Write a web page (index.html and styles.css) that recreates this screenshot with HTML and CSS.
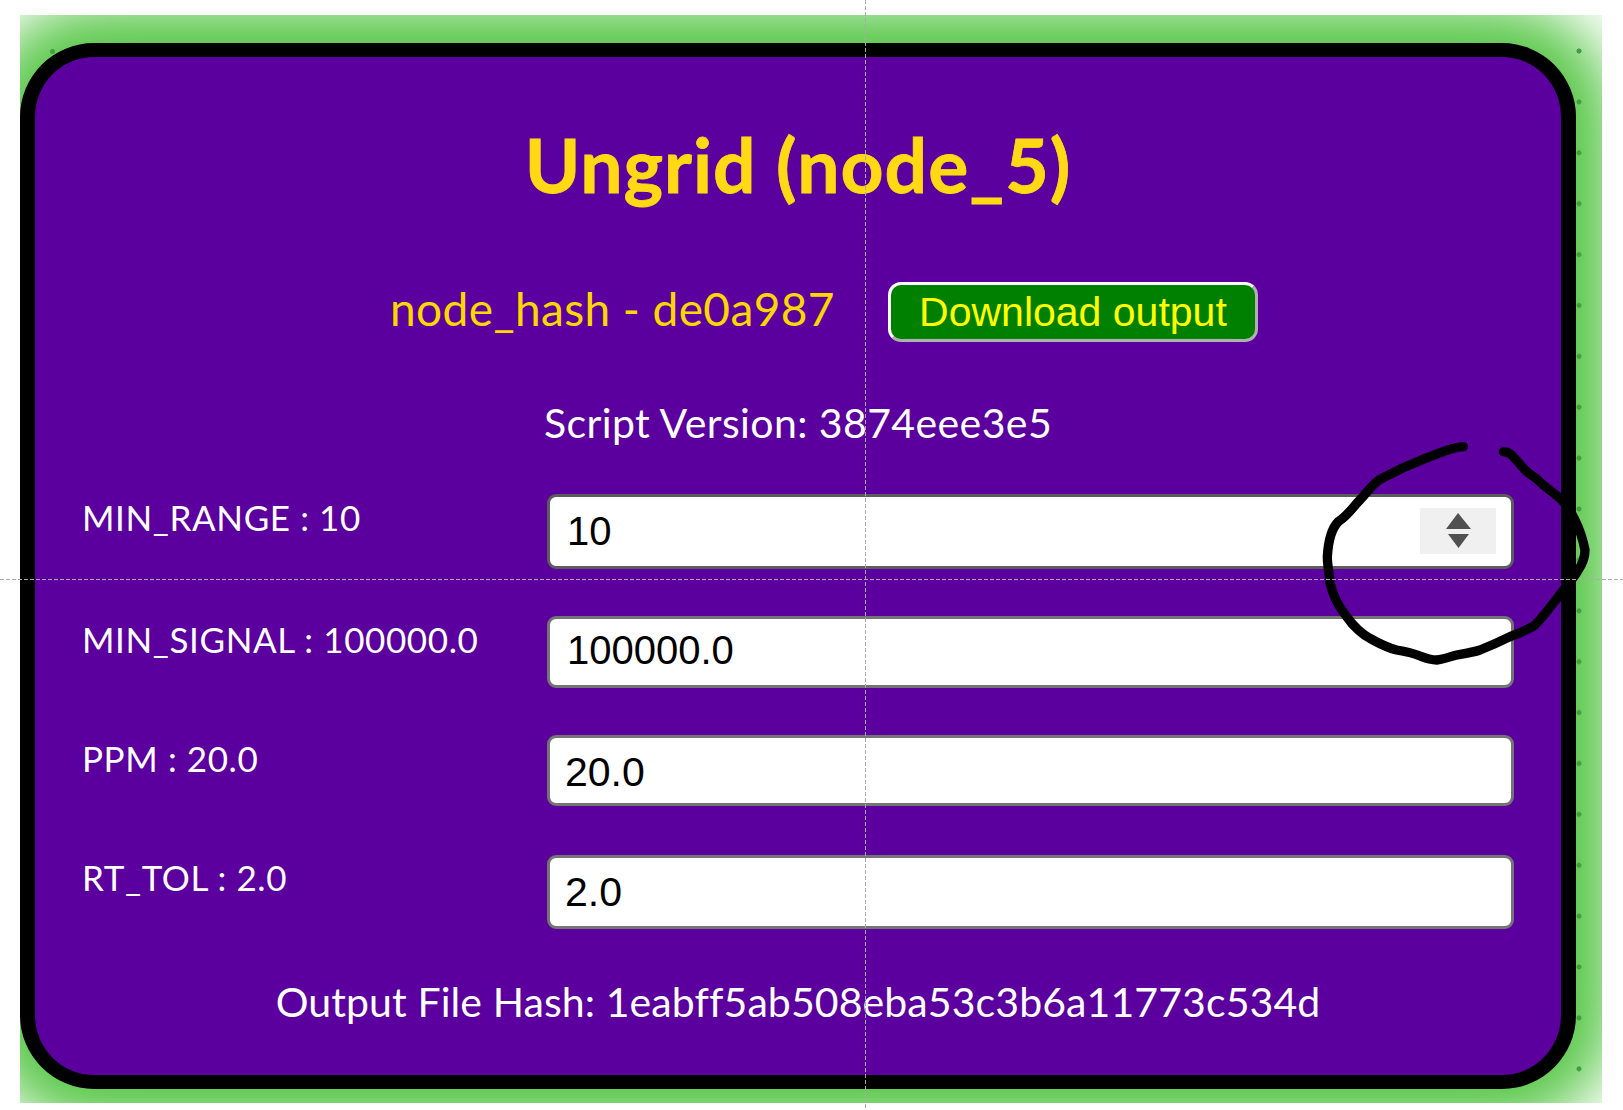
FILE: index.html
```html
<!DOCTYPE html>
<html lang="en">
<head>
<meta charset="utf-8">
<title>Ungrid (node_5)</title>
<link rel="stylesheet" href="styles.css">
</head>
<body>
<div class="frame">
  <main class="card">
    <h1 class="title">Ungrid (node_5)</h1>
    <div class="hash-row">
      <span class="node-hash">node_hash - de0a987</span>
      <button class="download" type="button">Download output</button>
    </div>
    <p class="meta script-version">Script Version: 3874eee3e5</p>
    <form class="params">
      <div class="row row-range">
        <label class="param-label">MIN_RANGE : 10</label>
        <div class="field">
          <input class="param-input" type="text" value="10">
          <span class="spinner">
            <svg width="76" height="46" viewBox="0 0 76 46"><path class="arrow" d="M38 5 26 21H51Z"/><path class="arrow" d="M28 26H49L38.5 40Z"/></svg>
          </span>
        </div>
      </div>
      <div class="row row-signal">
        <label class="param-label">MIN_SIGNAL : 100000.0</label>
        <div class="field"><input class="param-input" type="text" value="100000.0"></div>
      </div>
      <div class="row row-ppm">
        <label class="param-label">PPM : 20.0</label>
        <div class="field"><input class="param-input inset-less" type="text" value="20.0"></div>
      </div>
      <div class="row row-rt">
        <label class="param-label">RT_TOL : 2.0</label>
        <div class="field"><input class="param-input inset-less" type="text" value="2.0"></div>
      </div>
    </form>
    <p class="meta output-hash">Output File Hash: 1eabff5ab508eba53c3b6a11773c534d</p>
  </main>
  <div class="dots"></div>
  <div class="corner-dot"></div>
</div>
<svg class="scribble" width="373" height="280" viewBox="0 0 1119 840"><path d="M640 80C620 80 590 90 540 110C510 122 470 135 390 178C370 190 345 225 320 250C300 275 280 295 265 305C245 325 235 360 232 410C232 440 240 470 240 490C250 530 270 565 290 590C310 620 340 645 360 655C390 672 420 685 440 690C470 695 490 700 510 708C530 716 545 720 560 720C580 718 600 710 620 705C650 700 670 697 690 690C720 678 750 665 780 650C805 640 835 630 855 615C880 590 910 550 940 510C955 490 975 470 985 450C995 435 1005 410 1005 390C1000 365 990 330 975 300C965 280 950 255 935 240C920 225 900 212 880 195C865 180 845 165 830 155C815 140 800 120 785 105C778 98 770 96 760 95"/></svg>
<div class="guide guide-v"></div>
<div class="guide guide-h"></div>
</body>
</html>
```
FILE: styles.css
```css
* { box-sizing: border-box; }
html, body { margin: 0; height: 1110px; background: #fff; overflow: hidden; }
body { padding: 15px 21px 0 20px; font-family: "Lato", "Liberation Sans", sans-serif; }

.frame {
  position: relative;
  width: 1582px;
  height: 1088px;
  padding-top: 28px;
  overflow: hidden;
}

.card {
  width: 1556px;
  height: 1046px;
  padding: 0 47px;
  border: solid #000;
  border-width: 14.5px 15.5px;
  border-radius: 74px;
  background: #5b009e;
  box-shadow: 0 0 60px 38px #58c748;
  text-align: center;
}

.title {
  margin: 67px 0 0;
  font-size: 75px;
  line-height: 80px;
  font-weight: 700;
  color: #ffda14;
  letter-spacing: 1px;
  -webkit-text-stroke: 0.8px #ffda14;
}

.hash-row {
  display: flex;
  justify-content: center;
  align-items: center;
  gap: 53px;
  margin-top: 78px;
  padding-left: 52px;
}

.node-hash { margin-top: -6px; font-size: 46px; line-height: 60px; color: #ffd700; letter-spacing: 0.4px; }

.download {
  width: 370px;
  height: 60px;
  padding: 0;
  border: 3px solid;
  border-color: #fff #b0b0b0 #b0b0b0 #fff;
  border-radius: 13px;
  background: #008000;
  color: #ff0;
  font-family: "Liberation Sans", sans-serif;
  font-size: 41px;
}

.meta { margin: 0; font-size: 41px; line-height: 50px; color: #fff; }
.script-version { margin-top: 56px; letter-spacing: 0.4px; }
.output-hash { margin-top: 48px; letter-spacing: 0.1px; }

.params { margin-top: 46px; text-align: left; }
.row { display: grid; grid-template-columns: 465px 1fr; }
.row-range { height: 75px; }
.row-signal { height: 72px; margin-top: 47px; }
.row-ppm { height: 71px; margin-top: 47px; }
.row-rt { height: 74px; margin-top: 49px; }

.param-label { padding-top: 3px; font-size: 35px; line-height: 40px; color: #fff; letter-spacing: 0.6px; }
.row-rt .param-label { padding-top: 2px; }

.field { position: relative; height: 100%; }

.param-input {
  display: block;
  width: 100%;
  height: 100%;
  padding: 0 0 0 17px;
  border: 3.5px solid #747474;
  border-radius: 9px;
  background: #fff;
  color: #000;
  font-family: "Liberation Sans", sans-serif;
  font-size: 40px;
}
.row-range .param-input { border-color: #5c5c5c; }
.row-signal .param-input { padding-bottom: 4px; }
.row-ppm .param-input { padding-top: 4px; }
.inset-less { padding-left: 15px; font-size: 41px; }

.spinner {
  position: absolute;
  top: 14px;
  right: 18px;
  width: 76px;
  height: 46px;
  background: #f0f0f0;
}
.spinner svg { display: block; }
.arrow { fill: #505050; }

.dots {
  position: absolute;
  top: 32px;
  left: 1555px;
  width: 8px;
  height: 1040px;
  background: radial-gradient(circle at 4px 4px, #42a042 2.2px, transparent 2.9px) 0 0 / 8px 50.9px repeat-y;
}

.corner-dot {
  position: absolute;
  top: 34px;
  left: 30px;
  width: 5px;
  height: 5px;
  border-radius: 50%;
  background: #42a042;
}

.scribble { position: absolute; left: 1250px; top: 420px; }
.scribble path { fill: none; stroke: #000; stroke-width: 28; stroke-linecap: round; stroke-linejoin: round; }

.guide { position: absolute; }
.guide-v {
  left: 865px; top: 0; width: 1px; height: 1110px;
  background: repeating-linear-gradient(to bottom, #aaa 0 4px, transparent 4px 6px);
}
.guide-h {
  left: 0; top: 579px; width: 1623px; height: 1px;
  background: repeating-linear-gradient(to right, #aaa 0 4px, transparent 4px 6px);
}
```
